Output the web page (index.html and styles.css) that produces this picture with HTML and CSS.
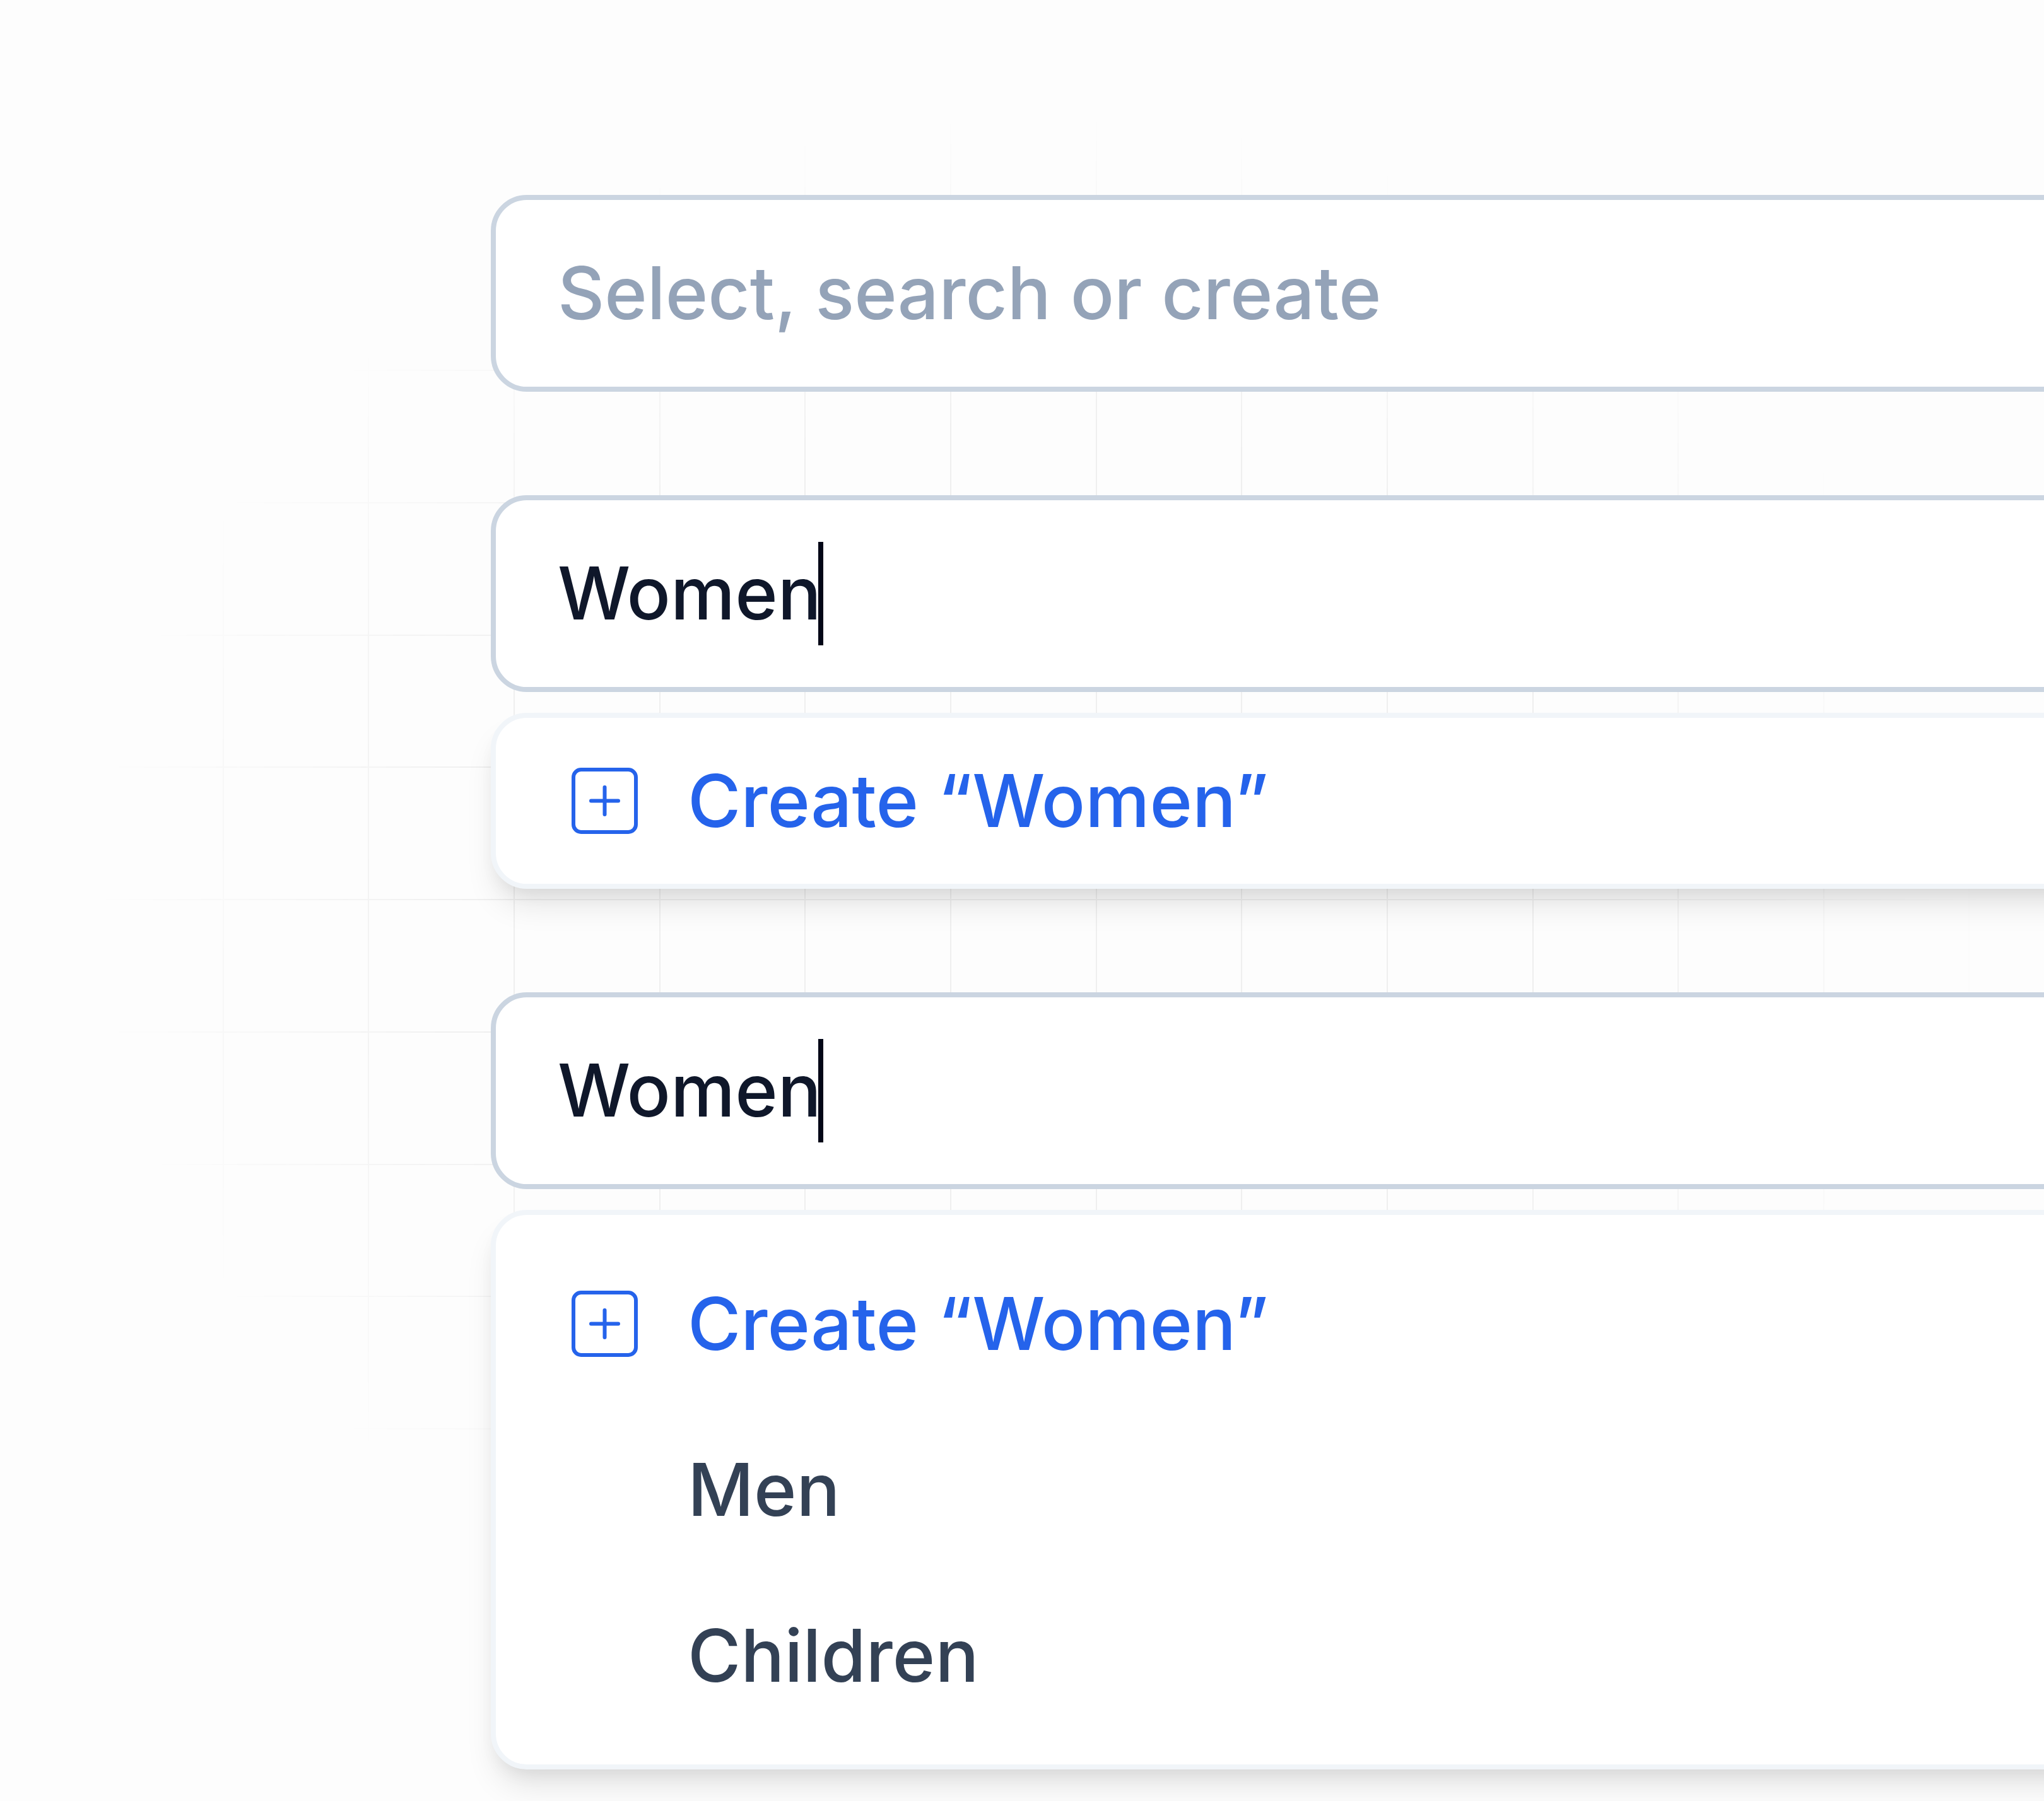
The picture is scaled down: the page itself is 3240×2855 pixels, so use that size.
FILE: index.html
```html
<!DOCTYPE html>
<html lang="en">
<head>
  <meta charset="utf-8">
  <meta name="viewport" content="width=device-width, initial-scale=1">
  <title>Creatable select</title>
  <link rel="stylesheet" href="styles.css">
</head>
<body>
  <svg class="grid-lines" width="3240" height="2855" aria-hidden="true">
    <path d="M123 0V2855M354 0V2855M584 0V2855M815 0V2855M1046 0V2855M1276 0V2855M1507 0V2855M1738 0V2855M1968 0V2855M2199 0V2855M2430 0V2855M2660 0V2855M2891 0V2855M3121 0V2855"/>
    <path d="M0 168H3240M0 377H3240M0 587H3240M0 797H3240M0 1007H3240M0 1216H3240M0 1426H3240M0 1636H3240M0 1846H3240M0 2055H3240M0 2265H3240M0 2475H3240M0 2685H3240"/>
  </svg>

  <main class="pickers">
    <section class="picker">
      <label class="field">
        <input class="field-input" type="text" aria-label="Category" placeholder="Select, search or create">
      </label>
    </section>

    <section class="picker">
      <label class="field">
        <input class="field-input field-input-typed" type="text" aria-label="Category" value="Women" size="5">
        <span class="caret"></span>
      </label>
      <div class="panel">
        <button class="option option-create" type="button">
          <svg class="option-icon" viewBox="0 0 131 131" aria-hidden="true">
            <rect x="16" y="16" width="99" height="99" rx="12"/>
            <path d="M65.500 44V87M44 65.500H87"/>
          </svg>
          Create “Women”
        </button>
      </div>
    </section>

    <section class="picker">
      <label class="field">
        <input class="field-input field-input-typed" type="text" aria-label="Category" value="Women" size="5">
        <span class="caret"></span>
      </label>
      <div class="panel panel-list">
        <button class="option option-create" type="button">
          <svg class="option-icon" viewBox="0 0 131 131" aria-hidden="true">
            <rect x="16" y="16" width="99" height="99" rx="12"/>
            <path d="M65.500 44V87M44 65.500H87"/>
          </svg>
          Create “Women”
        </button>
        <button class="option option-plain" type="button">Men</button>
        <button class="option option-plain" type="button">Children</button>
      </div>
    </section>
  </main>
</body>
</html>
```

FILE: styles.css
```css
*,
*::before,
*::after {
  box-sizing: border-box;
}

body {
  margin: 0;
  position: relative;
  overflow: hidden;
  background: #fdfdfd;
  color: #0f172a;
  font-family: Inter, "Liberation Sans", sans-serif;
  font-size: 115px;
  font-weight: 500;
  line-height: 164px;
}

/* Decorative grid that fades out towards its edges */
.grid-lines {
  position: absolute;
  top: 0;
  left: 0;
  fill: none;
  stroke: #efefef;
  stroke-width: 2;
  -webkit-mask-image: radial-gradient(1500px 1250px at 1650px 1426px, #000 60%, transparent);
  mask-image: radial-gradient(1500px 1250px at 1650px 1426px, #000 60%, transparent);
}

.pickers {
  position: relative;
  display: flex;
  flex-direction: column;
  gap: 164px;
  margin-right: -160px;
  padding: 309px 0 50px 778px;
}

.picker {
  display: flex;
  flex-direction: column;
  gap: 33px;
}

.field {
  display: flex;
  align-items: center;
  height: 312px;
  padding: 0 98px;
  border: 8px solid #cbd5e1;
  border-radius: 57px;
  background: #fff;
}

.field-input {
  flex: 1;
  min-width: 0;
  height: 164px;
  padding: 0;
  border: 0;
  outline: 0;
  background: none;
  color: inherit;
  font: inherit;
}

.field-input::placeholder {
  color: #94a3b8;
  opacity: 1;
}

.field-input-typed {
  flex: none;
  field-sizing: content;
}

.caret {
  width: 8px;
  height: 164px;
  margin-left: -5px;
  background: #020617;
}

.panel {
  display: flex;
  flex-direction: column;
  border: 8px solid #f1f5f9;
  border-radius: 57px;
  background: #fff;
  box-shadow:
    0 33px 49px -8px rgba(0, 0, 0, 0.1),
    0 16px 33px -16px rgba(0, 0, 0, 0.1);
}

.panel-list {
  padding: 41px 0;
}

.option {
  display: flex;
  align-items: center;
  gap: 66px;
  height: 263px;
  padding: 0 107px;
  border: 0;
  background: none;
  color: #334155;
  font: inherit;
  text-align: left;
}

.option-create {
  color: #2563eb;
}

.option-plain {
  padding-left: 304px;
}

.option-icon {
  flex: none;
  width: 131px;
  height: 131px;
  fill: none;
  stroke: currentColor;
  stroke-width: 6;
  stroke-linecap: round;
}
```
